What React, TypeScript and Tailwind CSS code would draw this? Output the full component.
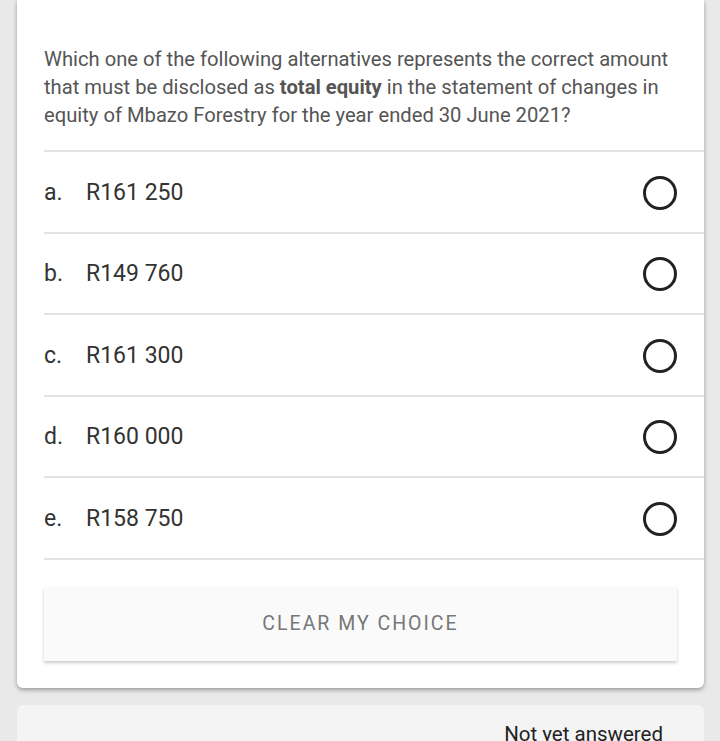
import React from 'react';

const options = [
  { letter: 'a.', value: 'R161 250' },
  { letter: 'b.', value: 'R149 760' },
  { letter: 'c.', value: 'R161 300' },
  { letter: 'd.', value: 'R160 000' },
  { letter: 'e.', value: 'R158 750' },
];

export default function App() {
  return (
    <div className="bg-[#e9e9e9] pl-[17px] pr-[16px] [font-family:Roboto,'Liberation_Sans',sans-serif] overflow-hidden h-[741px]">
      <div className="bg-white rounded-b-[6px] shadow-[0_2px_4px_rgba(0,0,0,0.35)] pl-[27px] pt-[45px] pb-[27px]">
        <p className="text-[20.2px] leading-[28px] text-[#555] pr-[20px]">
          Which one of the following alternatives represents the correct amount that must be
          disclosed as <strong className="font-bold text-[#555]">total equity</strong> in the
          statement of changes in equity of Mbazo Forestry for the year ended 30 June 2021?
        </p>
        <div className="mt-[21px] border-t-2 border-[#e2e2e2]">
          {options.map((o) => (
            <div
              key={o.letter}
              className="flex items-center h-[81.5px] border-b-2 border-[#e2e2e2] pr-[27px] pt-[2px]"
            >
              <span className="w-[42px] text-[23px] text-[#333]">{o.letter}</span>
              <span className="flex-1 text-[23px] text-[#333]">{o.value}</span>
              <span className="w-[34px] h-[34px] rounded-full border-[3px] border-[#222]" />
            </div>
          ))}
        </div>
        <div className="mr-[27px] mt-[27px]">
          <button className="w-full h-[74px] bg-[#fafafa] shadow-[0_2px_3px_rgba(0,0,0,0.2)] text-[19.5px] tracking-[2px] text-[#777] font-normal">
            CLEAR MY CHOICE
          </button>
        </div>
      </div>
      <div className="mt-[17px] bg-[#f4f4f4] rounded-t-[6px] h-[60px] pr-[41px] pt-[14px] flex justify-end">
        <span className="text-[20.5px] text-[#222]">Not yet answered</span>
      </div>
    </div>
  );
}
